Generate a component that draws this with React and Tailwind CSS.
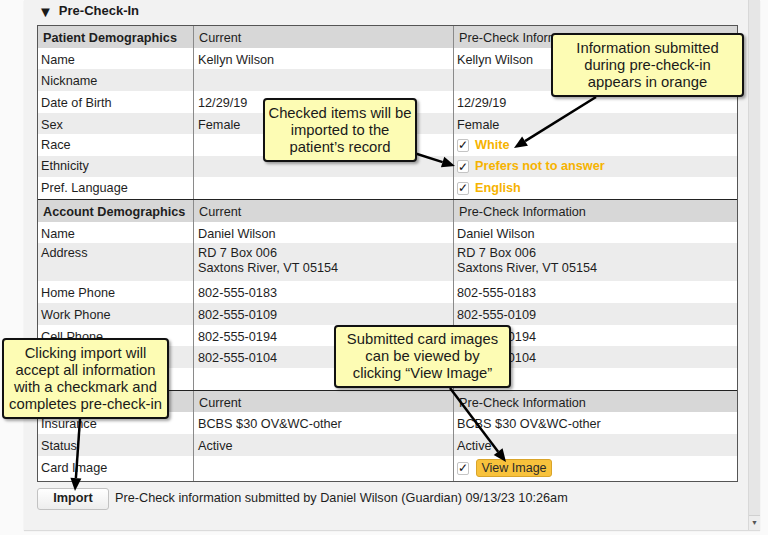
import React from "react";

const FONT = { fontFamily: '"Liberation Sans", Arial, Helvetica, sans-serif' };

function Check() {
  return (
    <span className="inline-flex w-[12px] h-[13px] items-center justify-center border border-[#c4c4c4] bg-white rounded-[2px] text-[12px] leading-none text-[#111] mr-[6px]">
      ✓
    </span>
  );
}

function Orange({ children }) {
  return (
    <span className="flex items-center">
      <Check />
      <span className="font-bold text-[#f6b300]">{children}</span>
    </span>
  );
}

function Row({ label, current, pre, bg = "bg-white", h = "h-[21.65px]", center = false }) {
  const cell = center ? "flex items-center" : "pt-[3px]";
  return (
    <div className={`grid grid-cols-[156px_260px_1fr] ${h} ${bg}`}>
      <div className={`${cell} pl-[3px] border-r border-[#8a8a8a]`}>{label}</div>
      <div className={`${cell} pl-[4px] border-r border-[#8a8a8a]`}>{current}</div>
      <div className={`${cell} pl-[3px]`}>{pre}</div>
    </div>
  );
}

function Header({ title }) {
  return (
    <div className="grid grid-cols-[156px_260px_1fr] h-[21.65px] bg-[#d7d7d7]">
      <div className="pt-[3px] pl-[5px] font-bold border-r border-[#8a8a8a]">{title}</div>
      <div className="pt-[3px] pl-[5px] border-r border-[#8a8a8a]">Current</div>
      <div className="pt-[3px] pl-[5px]">Pre-Check Information</div>
    </div>
  );
}

function Callout({ className, children }) {
  return (
    <div
      className={`absolute flex items-center justify-center text-center bg-[#fdfcb4] border-[2.5px] border-[#111] rounded-[4px] shadow-[2px_2px_3px_rgba(0,0,0,0.35)] text-[14.8px] leading-[17px] text-[#1a1a1a] ${className}`}
    >
      <div>{children}</div>
    </div>
  );
}

function Arrows() {
  const arrows = [
    [596, 97, 514, 148],
    [414, 153, 455, 166],
    [450, 388, 506, 462],
    [80, 419, 75, 491],
  ];
  return (
    <svg className="absolute inset-0 pointer-events-none" width="768" height="535">
      {arrows.map(([x1, y1, x2, y2], i) => {
        const a = Math.atan2(y2 - y1, x2 - x1);
        const len = 13;
        const w = 5.5;
        const bx = x2 - len * Math.cos(a);
        const by = y2 - len * Math.sin(a);
        const px = -Math.sin(a) * w;
        const py = Math.cos(a) * w;
        return (
          <g key={i}>
            <line x1={x1} y1={y1} x2={bx} y2={by} stroke="#000" strokeWidth="2.5" />
            <polygon
              points={`${x2},${y2} ${bx + px},${by + py} ${bx - px},${by - py}`}
              fill="#000"
            />
          </g>
        );
      })}
    </svg>
  );
}

export default function App() {
  const gray = "bg-[#ececec]";
  return (
    <div className="relative w-[768px] h-[535px] bg-[#fafafa] overflow-hidden text-[12.7px] text-[#1e1e1e]" style={FONT}>
      <div className="ml-[24px] w-[736px] h-[530px] bg-[#f2f2f2] flex shadow-[0_1px_1px_rgba(0,0,0,0.12)]">
        <div className="flex-1 pl-[13px]">
          <div className="h-[25px] flex items-center pl-[1px] pb-[3px] text-[13px] font-bold text-[#1a1a1a]">
            <span className="text-[15px] leading-none mr-[6px]">▼</span>
            Pre-Check-In
          </div>

          <div className="w-[701px] border border-[#555] bg-white">
            <Header title="Patient Demographics" />
            <Row label="Name" current="Kellyn Wilson" pre="Kellyn Wilson" />
            <Row label="Nickname" bg={gray} />
            <Row label="Date of Birth" current="12/29/19" pre="12/29/19" />
            <Row label="Sex" current="Female" pre="Female" bg={gray} />
            <Row label="Race" pre={<Orange>White</Orange>} center />
            <Row label="Ethnicity" pre={<Orange>Prefers not to answer</Orange>} bg={gray} center />
            <Row label="Pref. Language" pre={<Orange>English</Orange>} center />

            <div className="border-t border-[#222]">
              <Header title="Account Demographics" />
              <Row label="Name" current="Daniel Wilson" pre="Daniel Wilson" />
              <Row
                label="Address"
                current={<>RD 7 Box 006<br />Saxtons River, VT 05154</>}
                pre={<>RD 7 Box 006<br />Saxtons River, VT 05154</>}
                bg={gray}
                h="h-[38px] leading-[15px]"
              />
              <Row label="Home Phone" current="802-555-0183" pre="802-555-0183" />
              <Row label="Work Phone" current="802-555-0109" pre="802-555-0109" bg={gray} />
              <Row label="Cell Phone" current="802-555-0194" pre="802-555-0194" />
              <Row label="Other Phone" current="802-555-0104" pre="802-555-0104" bg={gray} />
              <Row label="Email" />
            </div>

            <div className="border-t border-[#222]">
              <Header title="Insurance" />
              <Row label="Insurance" current="BCBS $30 OV&WC-other" pre="BCBS $30 OV&WC-other" />
              <Row label="Status" current="Active" pre="Active" bg={gray} />
              <Row
                label="Card Image"
                h="h-[25px]"
                center
                pre={
                  <span className="flex items-center">
                    <Check />
                    <button className="h-[18px] w-[76px] ml-[1px] rounded-[3px] border border-[#d9a42a] bg-[#f8c23c] text-[12.5px] text-[#2a2a2a] leading-none">
                      View Image
                    </button>
                  </span>
                }
              />
            </div>
          </div>

          <div className="mt-[6px] flex items-center h-[22px]">
            <button className="w-[72px] h-[22px] rounded-[3px] border border-[#c2c2c2] bg-gradient-to-b from-white to-[#ededed] font-bold text-[12.7px] text-[#1e1e1e]">
              Import
            </button>
            <span className="ml-[6px]">
              Pre-Check information submitted by Daniel Wilson (Guardian) 09/13/23 10:26am
            </span>
          </div>
        </div>

        <div className="w-[12px] h-full flex flex-col bg-[#e6e6e6] border-l border-[#d8d8d8]">
          <div className="flex-1" />
          <div className="h-[15px] flex items-center justify-center bg-[#ededed] border-t border-[#d0d0d0] text-[7px] text-[#555]">
            ▼
          </div>
        </div>
      </div>

      <Arrows />

      <Callout className="left-[551px] top-[33px] w-[193px] h-[64px]">
        Information submitted<br />during pre-check-in<br />appears in orange
      </Callout>
      <Callout className="left-[263px] top-[98px] w-[154px] h-[64px]">
        Checked items will be<br />imported to the<br />patient’s record
      </Callout>
      <Callout className="left-[334px] top-[325px] w-[177px] h-[63px]">
        Submitted card images<br />can be viewed by<br />clicking “View Image”
      </Callout>
      <Callout className="left-[2px] top-[338px] w-[167px] h-[81px]">
        Clicking import will<br />accept all information<br />with a checkmark and<br />completes pre-check-in
      </Callout>
    </div>
  );
}
